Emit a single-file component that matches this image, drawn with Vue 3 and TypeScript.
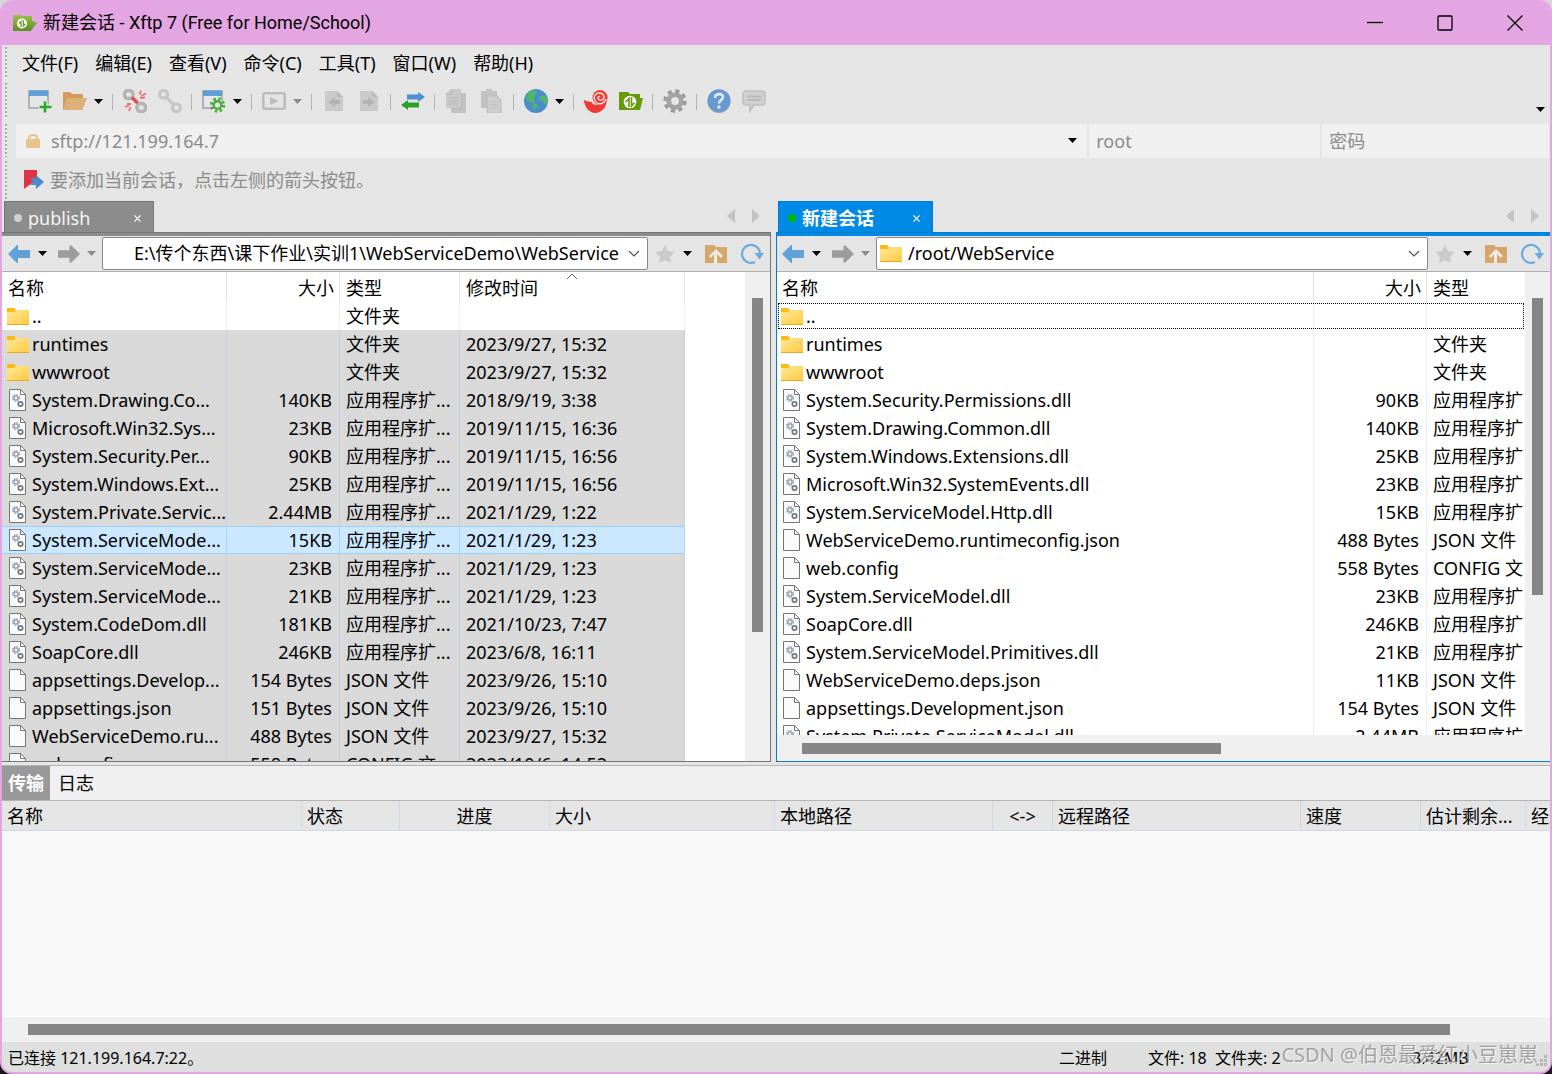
<script setup lang="ts">
import { ref } from 'vue'

type Kind = 'folder' | 'dll' | 'file'

interface Entry {
  name: string
  kind: Kind
  size: string
  type: string
  modified?: string
  state?: 'selected' | 'hot' | 'focus'
}

interface ToolItem {
  id: string
  label?: string
  caret?: boolean
  disabled?: boolean
}

const menus = ['文件(F)', '编辑(E)', '查看(V)', '命令(C)', '工具(T)', '窗口(W)', '帮助(H)']

const tools: ToolItem[][] = [
  [{ id: 'new', label: '新建' }, { id: 'open', label: '打开', caret: true }],
  [{ id: 'unlink', label: '断开' }, { id: 'link', label: '重新连接', disabled: true }],
  [{ id: 'props', label: '属性', caret: true }],
  [{ id: 'run', label: '运行', caret: true, disabled: true }],
  [{ id: 'doc-left', label: '传输到左侧', disabled: true }, { id: 'doc-right', label: '传输到右侧', disabled: true }],
  [{ id: 'swap', label: '同步' }],
  [{ id: 'copy', label: '复制', disabled: true }, { id: 'paste', label: '粘贴', disabled: true }],
  [{ id: 'globe', label: '编码', caret: true }],
  [{ id: 'shell', label: 'Xshell' }, { id: 'xftp', label: 'Xftp' }],
  [{ id: 'gear', label: '选项' }],
  [{ id: 'help', label: '帮助' }, { id: 'chat', label: '反馈', disabled: true }],
]

function dll(name: string, size: string, modified?: string, state?: Entry['state']): Entry {
  return { name, kind: 'dll', size, type: modified ? '应用程序扩...' : '应用程序扩', modified, state }
}

const localFiles: Entry[] = [
  { name: '..', kind: 'folder', size: '', type: '文件夹', modified: '' },
  { name: 'runtimes', kind: 'folder', size: '', type: '文件夹', modified: '2023/9/27, 15:32', state: 'selected' },
  { name: 'wwwroot', kind: 'folder', size: '', type: '文件夹', modified: '2023/9/27, 15:32', state: 'selected' },
  dll('System.Drawing.Co...', '140KB', '2018/9/19, 3:38', 'selected'),
  dll('Microsoft.Win32.Sys...', '23KB', '2019/11/15, 16:36', 'selected'),
  dll('System.Security.Per...', '90KB', '2019/11/15, 16:56', 'selected'),
  dll('System.Windows.Ext...', '25KB', '2019/11/15, 16:56', 'selected'),
  dll('System.Private.Servic...', '2.44MB', '2021/1/29, 1:22', 'selected'),
  dll('System.ServiceMode...', '15KB', '2021/1/29, 1:23', 'hot'),
  dll('System.ServiceMode...', '23KB', '2021/1/29, 1:23', 'selected'),
  dll('System.ServiceMode...', '21KB', '2021/1/29, 1:23', 'selected'),
  dll('System.CodeDom.dll', '181KB', '2021/10/23, 7:47', 'selected'),
  dll('SoapCore.dll', '246KB', '2023/6/8, 16:11', 'selected'),
  { name: 'appsettings.Develop...', kind: 'file', size: '154 Bytes', type: 'JSON 文件', modified: '2023/9/26, 15:10', state: 'selected' },
  { name: 'appsettings.json', kind: 'file', size: '151 Bytes', type: 'JSON 文件', modified: '2023/9/26, 15:10', state: 'selected' },
  { name: 'WebServiceDemo.ru...', kind: 'file', size: '488 Bytes', type: 'JSON 文件', modified: '2023/9/27, 15:32', state: 'selected' },
  { name: 'web.config', kind: 'file', size: '558 Bytes', type: 'CONFIG 文...', modified: '2023/10/6, 14:52', state: 'selected' },
]

const remoteFiles: Entry[] = [
  { name: '..', kind: 'folder', size: '', type: '', state: 'focus' },
  { name: 'runtimes', kind: 'folder', size: '', type: '文件夹' },
  { name: 'wwwroot', kind: 'folder', size: '', type: '文件夹' },
  dll('System.Security.Permissions.dll', '90KB'),
  dll('System.Drawing.Common.dll', '140KB'),
  dll('System.Windows.Extensions.dll', '25KB'),
  dll('Microsoft.Win32.SystemEvents.dll', '23KB'),
  dll('System.ServiceModel.Http.dll', '15KB'),
  { name: 'WebServiceDemo.runtimeconfig.json', kind: 'file', size: '488 Bytes', type: 'JSON 文件' },
  { name: 'web.config', kind: 'file', size: '558 Bytes', type: 'CONFIG 文' },
  dll('System.ServiceModel.dll', '23KB'),
  dll('SoapCore.dll', '246KB'),
  dll('System.ServiceModel.Primitives.dll', '21KB'),
  { name: 'WebServiceDemo.deps.json', kind: 'file', size: '11KB', type: 'JSON 文件' },
  { name: 'appsettings.Development.json', kind: 'file', size: '154 Bytes', type: 'JSON 文件' },
  dll('System.Private.ServiceModel.dll', '2.44MB'),
]

const panes = ref([
  {
    id: 'local', tab: 'publish', active: false, icon: false,
    path: 'E:\\传个东西\\课下作业\\实训1\\WebServiceDemo\\WebServiceDemo\\bin',
    files: localFiles, dated: true, hbar: false, thumb: 72,
  },
  {
    id: 'remote', tab: '新建会话', active: true, icon: true,
    path: '/root/WebService',
    files: remoteFiles, dated: false, hbar: true, thumb: 64,
  },
])

const address = ref('sftp://121.199.164.7')
const user = ref('root')
const password = ref('')

const queueColumns = [
  { title: '名称', width: 300 },
  { title: '状态', width: 98 },
  { title: '进度', width: 150, center: true },
  { title: '大小', width: 225 },
  { title: '本地路径', width: 218 },
  { title: '<->', width: 60, center: true },
  { title: '远程路径', width: 248 },
  { title: '速度', width: 120 },
  { title: '估计剩余...', width: 105 },
  { title: '经过时间', width: 120 },
]
</script>

<template>
  <svg class="defs" aria-hidden="true">
    <defs>
      <linearGradient id="g-folder" x1="0" y1="0" x2="1" y2="1">
        <stop offset="0" stop-color="#ffe79a" /><stop offset="1" stop-color="#ffcb3d" />
      </linearGradient>
      <linearGradient id="g-app" x1="0" y1="0" x2="0" y2="1">
        <stop offset="0" stop-color="#9cc04a" /><stop offset="1" stop-color="#5f8f22" />
      </linearGradient>
    </defs>
    <symbol id="i-app" viewBox="0 0 24 16">
      <path d="M0 0h8l1 1h10v5h1l4 2-4 5-2 3H0z" fill="url(#g-app)" />
      <circle cx="9" cy="8.500" r="5" fill="#fff" />
      <path d="M8 12V6.500L6 8.500M10.300 5v6l1.900-2" fill="none" stroke="#6f9c2c" stroke-width="1.300" />
    </symbol>
    <symbol id="i-new" viewBox="0 0 24 24">
      <rect x="1" y="2" width="19" height="17" fill="#e4e6e8" stroke="#a0a4a8" stroke-width="1.600" />
      <rect x="1" y="1.500" width="19" height="5.500" fill="#5f9fd8" />
      <path d="M17 11.500v13M10.500 18h13" stroke="#e5e5e5" stroke-width="5" />
      <path d="M17 12.500v11M11.500 18h12" stroke="#27a827" stroke-width="2.600" />
    </symbol>
    <symbol id="i-open" viewBox="0 0 24 24">
      <path d="M0 3h7l2 2h11v4h4l-5 12H0z" fill="#d39b5c" />
      <path d="M4 9h20l-5 12H0z" fill="#dcb078" />
    </symbol>
    <symbol id="i-unlink" viewBox="0 0 24 24">
      <g fill="none" stroke="#b4b4b4" stroke-width="3.400">
        <rect x="1.500" y="1.500" width="8.500" height="8" rx="3.500" /><rect x="14" y="14.500" width="8.500" height="8" rx="3.500" />
      </g>
      <path d="M9 8.500l5.500 5.500" stroke="#e8484f" stroke-width="3.600" />
      <path d="M16.500 5.500l1.500-4M18 7l5-2.500M17 9l5-.5M7.500 18l-1.500 4M6 16.500l-4 1.500M8 15l-4 0" stroke="#ec6f74" stroke-width="1.800" />
    </symbol>
    <symbol id="i-link" viewBox="0 0 24 24">
      <g fill="none" stroke="#c6c6c6" stroke-width="3.200">
        <rect x="1.600" y="1.600" width="8" height="7.500" rx="3.500" /><rect x="14.400" y="15" width="8" height="7.500" rx="3.500" /><path d="M8 8l8 8" />
      </g>
    </symbol>
    <symbol id="i-props" viewBox="0 0 24 24">
      <rect x="1" y="2" width="19" height="17" fill="#e4e6e8" stroke="#a0a4a8" stroke-width="1.600" />
      <rect x="1" y="1.500" width="19" height="5.500" fill="#5f9fd8" />
      <circle cx="15.500" cy="16" r="6.500" fill="#e5e5e5" />
      <circle cx="15.500" cy="16" r="6" fill="none" stroke="#4fae3f" stroke-width="3.400" stroke-dasharray="2.400 2.312" />
      <circle cx="15.500" cy="16" r="3.800" fill="none" stroke="#4fae3f" stroke-width="2.400" />
    </symbol>
    <symbol id="i-run" viewBox="0 0 24 24">
      <rect x="1.300" y="4.300" width="21.400" height="15.400" rx="1.500" fill="none" stroke="#bdbdbd" stroke-width="2.600" />
      <path d="M8 8l9 4-9 4z" fill="#bdbdbd" />
    </symbol>
    <symbol id="i-doc-left" viewBox="0 0 24 24">
      <path d="M3 2h12l6 6v14H3z" fill="#cacaca" /><path d="M15 2l6 6h-6z" fill="#b9b9b9" />
      <path d="M18 11v4h-5v3l-7-5 7-5v3z" fill="#b2b2b2" />
    </symbol>
    <symbol id="i-doc-right" viewBox="0 0 24 24">
      <path d="M3 2h12l6 6v14H3z" fill="#cacaca" /><path d="M15 2l6 6h-6z" fill="#b9b9b9" />
      <path d="M6 11v4h5v3l7-5-7-5v3z" fill="#b2b2b2" />
    </symbol>
    <symbol id="i-swap" viewBox="0 0 24 24">
      <path d="M6 5.500h11V3l7 5-7 5v-2.500H6z" fill="#4e8fd0" />
      <path d="M18 13.500H7V11l-7 5 7 5v-2.500h11z" fill="#2ba02b" />
    </symbol>
    <symbol id="i-copy" viewBox="0 0 24 24">
      <path d="M6 4h15v20H6z" fill="#c3c3c3" /><path d="M6 0h10v19H1V5z" fill="#c9c9c9" />
      <path d="M6 0v5H1M4 9h9M4 12h9M4 15h9M17 5v15H6" fill="none" stroke="#b8b8b8" stroke-width="1.200" />
    </symbol>
    <symbol id="i-paste" viewBox="0 0 24 24">
      <path d="M1 2h5V0h6v2h5v17H1z" fill="#c2c2c2" /><path d="M7 7h10l4 4v13H7z" fill="#cecece" />
      <path d="M7 7h10l4 4v13H7zM10 13h8M10 16h8M10 19h8" fill="none" stroke="#bdbdbd" stroke-width="1.200" />
    </symbol>
    <symbol id="i-globe" viewBox="0 0 24 24">
      <circle cx="12" cy="12" r="12" fill="#4d8ccc" />
      <path d="M4 4l5-3 4 2-2 3-1 3 1 3-2 2-4-1-3-3 1-4zM16 7l5-1 2 4v6l-3-1-1-3-4-1zM9 14l4 1 1 2-3 4-2-2z" fill="#4cb86a" />
    </symbol>
    <symbol id="i-shell" viewBox="0 0 24 24">
      <path d="M0 11c3 1 5 2 8 2 0 2 2 3 5 3 5 0 9-4 10-9 1 9-4 17-12 17C5 24 0 17 0 11z" fill="#ef3b34" />
      <circle cx="16" cy="8.500" r="7.500" fill="#ef3b34" />
      <path d="M22 10c-1 4-6 6-9 4s-4-7-1-9 8-1 8 3-6 4-6 1c0-1 1-2 2-1" fill="none" stroke="#f6dedd" stroke-width="1.400" />
    </symbol>
    <symbol id="i-xftp" viewBox="0 0 24 24">
      <path d="M0 3h9l2 2h10v4h3l-3 12H0z" fill="#679a0a" />
      <circle cx="11" cy="13" r="6.300" fill="#fff" />
      <path d="M10 18v-8.500L6.500 13M12.500 8v9l3-3.500" fill="none" stroke="#679a0a" stroke-width="1.600" />
    </symbol>
    <symbol id="i-gear" viewBox="0 0 24 24">
      <circle cx="12" cy="12" r="9.500" fill="none" stroke="#9b9b9b" stroke-width="4.500" stroke-dasharray="3.900 3.562" />
      <circle cx="12" cy="12" r="6.300" fill="none" stroke="#a3a3a3" stroke-width="4.800" />
    </symbol>
    <symbol id="i-help" viewBox="0 0 24 24">
      <circle cx="12" cy="12.500" r="11.500" fill="#a5adb5" /><circle cx="12" cy="11.700" r="11.500" fill="#6899cf" />
      <path d="M8 9c0-5 8-5 8-1 0 3-4 3-4 6.500" fill="none" stroke="#e4edf6" stroke-width="2.600" />
      <circle cx="12" cy="18" r="1.700" fill="#e4edf6" />
    </symbol>
    <symbol id="i-chat" viewBox="0 0 24 24">
      <path d="M4 2h16a3 3 0 0 1 3 3v8a3 3 0 0 1-3 3h-8l-4 6v-6H4a3 3 0 0 1-3-3V5a3 3 0 0 1 3-3z" fill="#d0d0d0" stroke="#c0c0c0" stroke-width="1.600" />
      <path d="M5 7.500h14M5 11h14" stroke="#bababa" stroke-width="2" />
    </symbol>
    <symbol id="i-caret" viewBox="0 0 9 5"><path d="M0 0h9L4.500 5z" fill="currentColor" /></symbol>
    <symbol id="i-chevron" viewBox="0 0 12 7"><path d="M1 1l5 5 5-5" fill="none" stroke="#555" stroke-width="1.200" /></symbol>
    <symbol id="i-back" viewBox="0 0 22 18"><path d="M0 9l9-9h1v5h12v8H10v5H9z" fill="#62a1d8" /></symbol>
    <symbol id="i-fwd" viewBox="0 0 23 18"><path d="M23 9l-9-9h-2v5H0v8h12v5h2z" fill="#9c9c9c" /></symbol>
    <symbol id="i-star" viewBox="0 0 20 20"><path d="M10 1l3 6 6.500 1-4.500 5 1 6-6-3-6 3 1-6L.5 8 7 7z" fill="#cacaca" /></symbol>
    <symbol id="i-up" viewBox="0 0 22 20">
      <path d="M0 1h9l2 2h11v16H0z" fill="#d6a76c" /><path d="M11 5l7 7-2 2-4-4v9h-3v-9l-3 4-2-2z" fill="#f4ede4" />
    </symbol>
    <symbol id="i-refresh" viewBox="0 0 24 22">
      <path d="M20 10A9 9 0 1 0 15 19" fill="none" stroke="#6ea9dd" stroke-width="2.200" /><path d="M14.500 10H24l-4.500 6.500z" fill="#6ea9dd" />
    </symbol>
    <symbol id="i-lock" viewBox="0 0 14 14">
      <rect x="0" y="5" width="14" height="9" rx="1" fill="#e9c38c" /><path d="M3 6V4a3 3 0 0 1 3-3h2a3 3 0 0 1 3 3v2" fill="none" stroke="#e9c38c" stroke-width="2" />
    </symbol>
    <symbol id="i-mark" viewBox="0 0 20 20">
      <path d="M0 0h13v10l-5 3-8 6z" fill="#de3440" /><path d="M6 8h6V5l8 7-8 7v-4H6l3-3.500z" fill="#4b8bcb" />
    </symbol>
    <symbol id="i-folder" viewBox="0 0 22 17">
      <path d="M0 0h7l2 2-1 3H0z" fill="#fdb913" /><path d="M0 4h7l2-2h13v15H0z" fill="url(#g-folder)" /><path d="M0 16.500h22" stroke="#e9aa1c" />
    </symbol>
    <symbol id="i-file" viewBox="0 0 17 22">
      <path d="M.5.5h11l5 5v16H.5z" fill="#fbfbfb" stroke="#757575" /><path d="M11.500.5v5h5" fill="none" stroke="#757575" />
    </symbol>
    <symbol id="i-dll" viewBox="0 0 17 22">
      <path d="M.5.5h11l5 5v16H.5z" fill="#fbfbfb" stroke="#757575" /><path d="M11.500.5v5h5" fill="none" stroke="#757575" />
      <circle cx="7" cy="9" r="3.200" fill="none" stroke="#9da8b4" stroke-width="1.800" stroke-dasharray="1.500 1.013" />
      <circle cx="7" cy="9" r="2" fill="none" stroke="#9da8b4" stroke-width="1.600" />
      <circle cx="11.500" cy="15" r="2.200" fill="#fbfbfb" stroke="#6c7884" stroke-width="1.700" />
    </symbol>
  </svg>

  <div class="window">
    <header class="title-bar">
      <svg class="app-icon"><use href="#i-app" /></svg>
      <h1>新建会话 - Xftp 7 (Free for Home/School)</h1>
      <div class="controls">
        <button aria-label="最小化"><svg viewBox="0 0 16 16"><path d="M0 7.500h16" /></svg></button>
        <button aria-label="最大化"><svg viewBox="0 0 16 16"><rect x="1" y="1" width="14" height="14" rx="1" /></svg></button>
        <button aria-label="关闭"><svg viewBox="0 0 16 16"><path d="M.5.5l15 15M15.500.5l-15 15" /></svg></button>
      </div>
    </header>

    <nav class="menu bar">
      <button v-for="m in menus" :key="m">{{ m }}</button>
    </nav>

    <div class="toolbar bar">
      <div v-for="(group, g) in tools" :key="g" class="group">
        <div v-for="t in group" :key="t.id" class="tool">
          <button :aria-label="t.label" :disabled="t.disabled"><svg class="tool-icon"><use :href="'#i-' + t.id" /></svg></button>
          <button v-if="t.caret" class="drop" :aria-label="t.label + '菜单'" :disabled="t.disabled"><svg class="caret"><use href="#i-caret" /></svg></button>
        </div>
      </div>
      <button class="overflow" aria-label="更多"><svg class="caret"><use href="#i-caret" /></svg></button>
    </div>

    <form class="address bar" @submit.prevent>
      <div class="field host">
        <svg class="lock"><use href="#i-lock" /></svg>
        <input v-model="address" aria-label="地址">
        <button type="button" aria-label="地址列表"><svg class="caret"><use href="#i-caret" /></svg></button>
      </div>
      <div class="field"><input v-model="user" aria-label="用户名"></div>
      <div class="field"><input v-model="password" type="password" placeholder="密码" aria-label="密码"></div>
    </form>

    <div class="links bar">
      <svg class="mark"><use href="#i-mark" /></svg>
      <span>要添加当前会话，点击左侧的箭头按钮。</span>
    </div>

    <main class="panes">
      <section v-for="p in panes" :key="p.id" class="pane" :class="[p.id, { active: p.active }]">
        <div class="tab-strip">
          <div class="tab">
            <span class="dot"></span>
            <span class="tab-name">{{ p.tab }}</span>
            <button aria-label="关闭标签"><svg viewBox="0 0 8 8"><path d="M.5.5l7 7M7.500.5l-7 7" /></svg></button>
          </div>
          <div class="tab-arrows">
            <svg viewBox="0 0 8 14"><path d="M8 0v14L0 7z" /></svg>
            <svg viewBox="0 0 8 14"><path d="M0 0v14l8-7z" /></svg>
          </div>
        </div>
        <div class="body">
          <div class="nav">
            <button aria-label="后退"><svg class="arrow"><use href="#i-back" /></svg></button>
            <button class="nav-drop wide" aria-label="后退历史"><svg class="caret"><use href="#i-caret" /></svg></button>
            <button aria-label="前进" disabled><svg class="arrow"><use href="#i-fwd" /></svg></button>
            <button class="nav-drop" aria-label="前进历史" disabled><svg class="caret"><use href="#i-caret" /></svg></button>
            <div class="path">
              <span class="path-icon"><svg v-if="p.icon" class="folder"><use href="#i-folder" /></svg></span>
              <input v-model="p.path" aria-label="路径">
              <button aria-label="路径列表"><svg class="chevron"><use href="#i-chevron" /></svg></button>
            </div>
            <button class="star" aria-label="书签"><svg><use href="#i-star" /></svg></button>
            <button class="mark-drop" aria-label="书签列表"><svg class="caret"><use href="#i-caret" /></svg></button>
            <button class="up" aria-label="上级目录"><svg><use href="#i-up" /></svg></button>
            <button class="refresh" aria-label="刷新"><svg><use href="#i-refresh" /></svg></button>
          </div>
          <div class="listing">
            <div class="list-col">
              <div class="list">
                <table>
                  <colgroup>
                    <col class="c-name"><col class="c-size"><col class="c-type"><col v-if="p.dated" class="c-date">
                  </colgroup>
                  <thead>
                    <tr>
                      <th>名称</th><th class="num">大小</th><th class="type">类型</th>
                      <th v-if="p.dated" class="sorted">修改时间<svg class="sort" viewBox="0 0 12 6"><path d="M1 6l5-5 5 5" /></svg></th>
                    </tr>
                  </thead>
                  <tbody>
                    <tr v-for="(f, i) in p.files" :key="i" :class="f.state">
                      <td>
                        <div class="name">
                          <svg :class="f.kind === 'folder' ? 'folder' : 'doc'"><use :href="'#i-' + f.kind" /></svg>
                          <span>{{ f.name }}</span>
                        </div>
                      </td>
                      <td class="num">{{ f.size }}</td>
                      <td class="type">{{ f.type }}</td>
                      <td v-if="p.dated">{{ f.modified }}</td>
                    </tr>
                  </tbody>
                </table>
              </div>
              <div v-if="p.hbar" class="hbar"><div class="thumb" :style="{ width: '60%' }"></div></div>
            </div>
            <div class="vbar"><div class="thumb" :style="{ height: p.thumb + '%' }"></div></div>
          </div>
        </div>
      </section>
    </main>

    <section class="dock">
      <div class="dock-tabs">
        <button class="current">传输</button>
        <button>日志</button>
      </div>
      <div class="queue">
        <table>
          <colgroup><col v-for="c in queueColumns" :key="c.title" :style="{ width: c.width + 'px' }"></colgroup>
          <thead>
            <tr><th v-for="c in queueColumns" :key="c.title" :class="{ center: c.center }">{{ c.title }}</th></tr>
          </thead>
        </table>
      </div>
      <div class="hbar"><div class="thumb" :style="{ width: '95%' }"></div></div>
    </section>

    <footer class="status">
      <span class="connected">已连接 121.199.164.7:22。</span>
      <span class="mode">二进制</span>
      <span class="counts">文件: 18&nbsp; 文件夹: 2</span>
      <span class="total">3.42MB</span>
      <svg class="grip" viewBox="0 0 12 12"><path d="M8 0h3v3H8zM4 4h3v3H4zM8 4h3v3H8zM0 8h3v3H0zM4 8h3v3H4zM8 8h3v3H8z" /></svg>
      <span class="watermark">CSDN @伯恩最爱红小豆崽崽</span>
    </footer>
  </div>
</template>

<style>
body {
  margin: 0;
  background: linear-gradient(#d6d6da 50%, #1c1c1c 50%);
}
</style>

<style scoped>
.defs { position: absolute; width: 0; height: 0; }

.window, .window * { box-sizing: border-box; }
.window {
  display: flex;
  flex-direction: column;
  height: 100vh;
  overflow: hidden;
  border: 2px solid #e4a5e3;
  border-top: 0;
  border-radius: 12px;
  background: #e5e5e5;
  color: #000;
  font: 18px/28px "Noto Sans", "Noto Sans CJK SC", sans-serif;
}
.window svg { display: block; flex: none; }

button {
  display: flex;
  align-items: center;
  flex: none;
  padding: 0;
  border: 0;
  background: none;
  color: inherit;
  font: inherit;
}
input {
  min-width: 0;
  padding: 0;
  border: 0;
  outline: 0;
  background: none;
  color: inherit;
  font: inherit;
}
input::placeholder { color: inherit; opacity: 1; }
.caret { width: 9px; height: 5px; color: #000; }
button:disabled .caret { color: #8c8c8c; }

.title-bar {
  display: flex;
  align-items: center;
  flex: none;
  height: 45px;
  padding-left: 11px;
  background: #e4a5e3;
}
.app-icon { width: 24px; height: 16px; }
h1 { flex: 1; margin: 0 0 0 6px; font: 400 18px/28px Roboto, "Noto Sans CJK SC", sans-serif; }
.controls { display: flex; }
.controls button { justify-content: center; width: 70px; height: 44px; }
.controls svg { width: 16px; height: 16px; fill: none; stroke: #000; stroke-width: 1.300; }

.bar { display: flex; align-items: center; flex: none; }
.bar::before {
  content: "";
  flex: none;
  align-self: stretch;
  width: 2px;
  margin: 2px 0 2px 3px;
  background: repeating-linear-gradient(#a9a9a9 0 2px, #f2f2f2 2px 3px, transparent 3px 4px);
}
.menu { height: 36px; gap: 17px; }
.menu::before { margin-right: -2px; }

.toolbar { height: 41px; padding-bottom: 1px; }
.toolbar::before { margin-right: 21px; }
.group { display: flex; gap: 11px; }
.group + .group::before {
  content: "";
  width: 1px;
  height: 16px;
  margin: 5px -1px 0 9px;
  background: #b4b4b4;
}
.tool { display: flex; }
.tool-icon { width: 24px; height: 24px; }
.drop { justify-content: flex-end; width: 16px; }
.overflow { margin: 16px 5px 0 auto; }

.address { height: 37px; gap: 2px; padding-right: 1px; color: #8b8b8b; }
.address::before { margin-right: 7px; }
.field { display: flex; align-items: center; flex: 224 1 0; min-width: 0; height: 34px; padding-left: 7px; background: #f0f0f0; }
.field:last-child { flex-grow: 220; }
.field input { flex: 1; height: 34px; }
.host { flex-grow: 1052; padding: 0 10px; }
.host input { margin: 0 11px; }
.lock { width: 14px; height: 14px; }

.links { height: 42px; color: #8b8b8b; }
.links::before { margin-right: 17px; }
.mark { width: 20px; height: 20px; margin-right: 6px; }

.panes { display: flex; flex: 562 1 0; gap: 5px; min-height: 0; }
.pane { display: flex; flex-direction: column; flex: 769 1 0; min-width: 0; --tone: #8c8c8c; --edge: #777; }
.pane.active { flex-grow: 774; --tone: #008ae6; --edge: #0a7bc8; }

.tab-strip { display: flex; justify-content: space-between; height: 31px; padding: 0 11px 0 2px; }
.tab {
  display: flex;
  align-items: center;
  min-width: 150px;
  padding: 2px 12px 0 9px;
  border: solid var(--edge);
  border-width: 1px 1px 0;
  background: var(--tone);
  color: #f4f4f4;
}
.active .tab { min-width: 155px; font-weight: 700; color: #fff; }
.dot { width: 8px; height: 8px; margin-right: 6px; border-radius: 4px; background: #d0d0d0; }
.active .dot { background: #00b900; }
.tab-name { flex: 1; }
.tab svg { width: 7px; height: 7px; stroke: #fff; stroke-width: 1.400; }
.tab-arrows { display: flex; align-items: center; gap: 17px; padding-bottom: 1px; }
.tab-arrows svg { width: 8px; height: 14px; fill: #c3c3c3; }

.body {
  display: flex;
  flex-direction: column;
  flex: 1;
  min-height: 0;
  border: solid var(--edge);
  border-width: 1px 1px 1px 0;
}
.active .body { border-width: 1px 0 1px 1px; }
.nav {
  display: flex;
  align-items: center;
  flex: none;
  height: 39px;
  padding: 0 6px;
  border-top: 3px solid var(--tone);
  border-bottom: 1px solid #b0b0b0;
}
.active .nav { padding: 0 6px 0 5px; }
.arrow { width: 22px; height: 18px; }
.nav-drop { justify-content: center; width: 22px; }
.nav-drop.wide { width: 28px; padding-right: 4px; }
.path {
  display: flex;
  align-items: center;
  flex: 1;
  min-width: 0;
  height: 33px;
  border: 1px solid #8a8a8a;
  border-radius: 2px;
  background: #fff;
}
.path-icon { width: 22px; height: 17px; margin: 0 6px 0 3px; }
.path input { flex: 1; height: 28px; margin-bottom: 1px; }
.chevron { width: 12px; height: 7px; margin: 0 7px 0 9px; }
.star { margin-left: 7px; }
.star svg { width: 20px; height: 20px; }
.mark-drop { margin-left: 8px; }
.up { margin-left: 13px; }
.up svg { width: 22px; height: 20px; }
.refresh { margin-left: 13px; }
.refresh svg { width: 24px; height: 22px; }

.listing { display: flex; flex: 1; min-height: 0; background: #fff; }
.list-col { display: flex; flex-direction: column; flex: 1; min-width: 0; }
.list { flex: 1; min-height: 0; overflow: hidden; }
.vbar { width: 25px; padding: 26px 7px 0; background: #f0f0f0; }
.hbar { flex: none; height: 26px; padding: 8px 25px; background: #f0f0f0; }
.thumb { background: #868686; }
.hbar .thumb { height: 11px; }

table { table-layout: fixed; border-collapse: separate; border-spacing: 0; }
.list table { width: 683px; }
.c-size { width: 113px; }
.c-type { width: 120px; }
.c-date { width: 225px; }
th, td {
  overflow: hidden;
  padding: 0 7px 0 6px;
  border-right: 1px solid #e6effa;
  font-weight: 400;
  text-align: left;
  white-space: nowrap;
}
th { height: 30px; padding-top: 1px; border-color: #e3e3e3; }
td { height: 28px; }
td:first-child { padding-right: 0; }
.remote .list table { width: 100%; }
.remote .c-type { width: 98px; }
.remote .type { padding-right: 0; border-right: 0; }
.remote th:first-child, .remote td:first-child { padding-left: 5px; }
.num { text-align: right; }
th.num { padding-right: 5px; }
.selected td { border-color: #c6d1db; background: #d9d9d9; }
.hot td { border-color: #a9d3f5; background: #cce8ff; box-shadow: inset 0 1px #99d1ff, inset 0 -1px #99d1ff; }
.focus { outline: 1px dotted #000; outline-offset: -2px; }
.sorted { position: relative; }
.sort { position: absolute; top: 1px; left: calc(50% - 6px); width: 12px; height: 6px; fill: none; stroke: #666; }
.name { display: flex; align-items: center; }
.folder { width: 22px; height: 17px; }
.name .folder { margin: 0 3px 0 -1px; }
.doc { width: 17px; height: 22px; margin: 0 6px 0 1px; }

.dock { display: flex; flex-direction: column; flex: 276 1 0; min-height: 0; margin-top: 3px; border-top: 1px solid #b4b4b4; }
.dock-tabs { display: flex; flex: none; height: 35px; border-bottom: 1px solid #b4b4b4; background: #f0f0f0; }
.dock-tabs button { padding: 0 7px 0 8px; }
.dock-tabs .current { padding: 0 6px; background: #999; color: #fff; font-weight: 700; }
.queue { flex: 1; min-height: 0; overflow: hidden; border-bottom: 1px solid #fff; background: #f8f8f8; }
.queue table { width: 1644px; }
.queue th { padding: 1px 5px 0; border-color: #d0d9e8; border-bottom: 1px solid #d0d9e8; background: #e5e5e5; }
.queue .center { text-align: center; }
.dock .hbar { height: 25px; padding: 7px 25px 7px 26px; }

.status {
  position: relative;
  display: flex;
  align-items: center;
  flex: none;
  height: 30px;
  padding: 2px 2px 0 6px;
  background: #dfdfdf;
  font-size: 16px;
}
.connected { flex: 1; }
.mode { width: 89px; }
.counts { width: 264px; }
.total { width: 124px; }
.grip { width: 12px; height: 12px; margin-top: 6px; fill: #b8b8b8; }
.watermark {
  position: absolute;
  right: 12px;
  bottom: 3px;
  color: rgba(130, 130, 130, 0.7);
  font-size: 20px;
  text-shadow: 1px 1px #f2f2f2;
}
</style>
